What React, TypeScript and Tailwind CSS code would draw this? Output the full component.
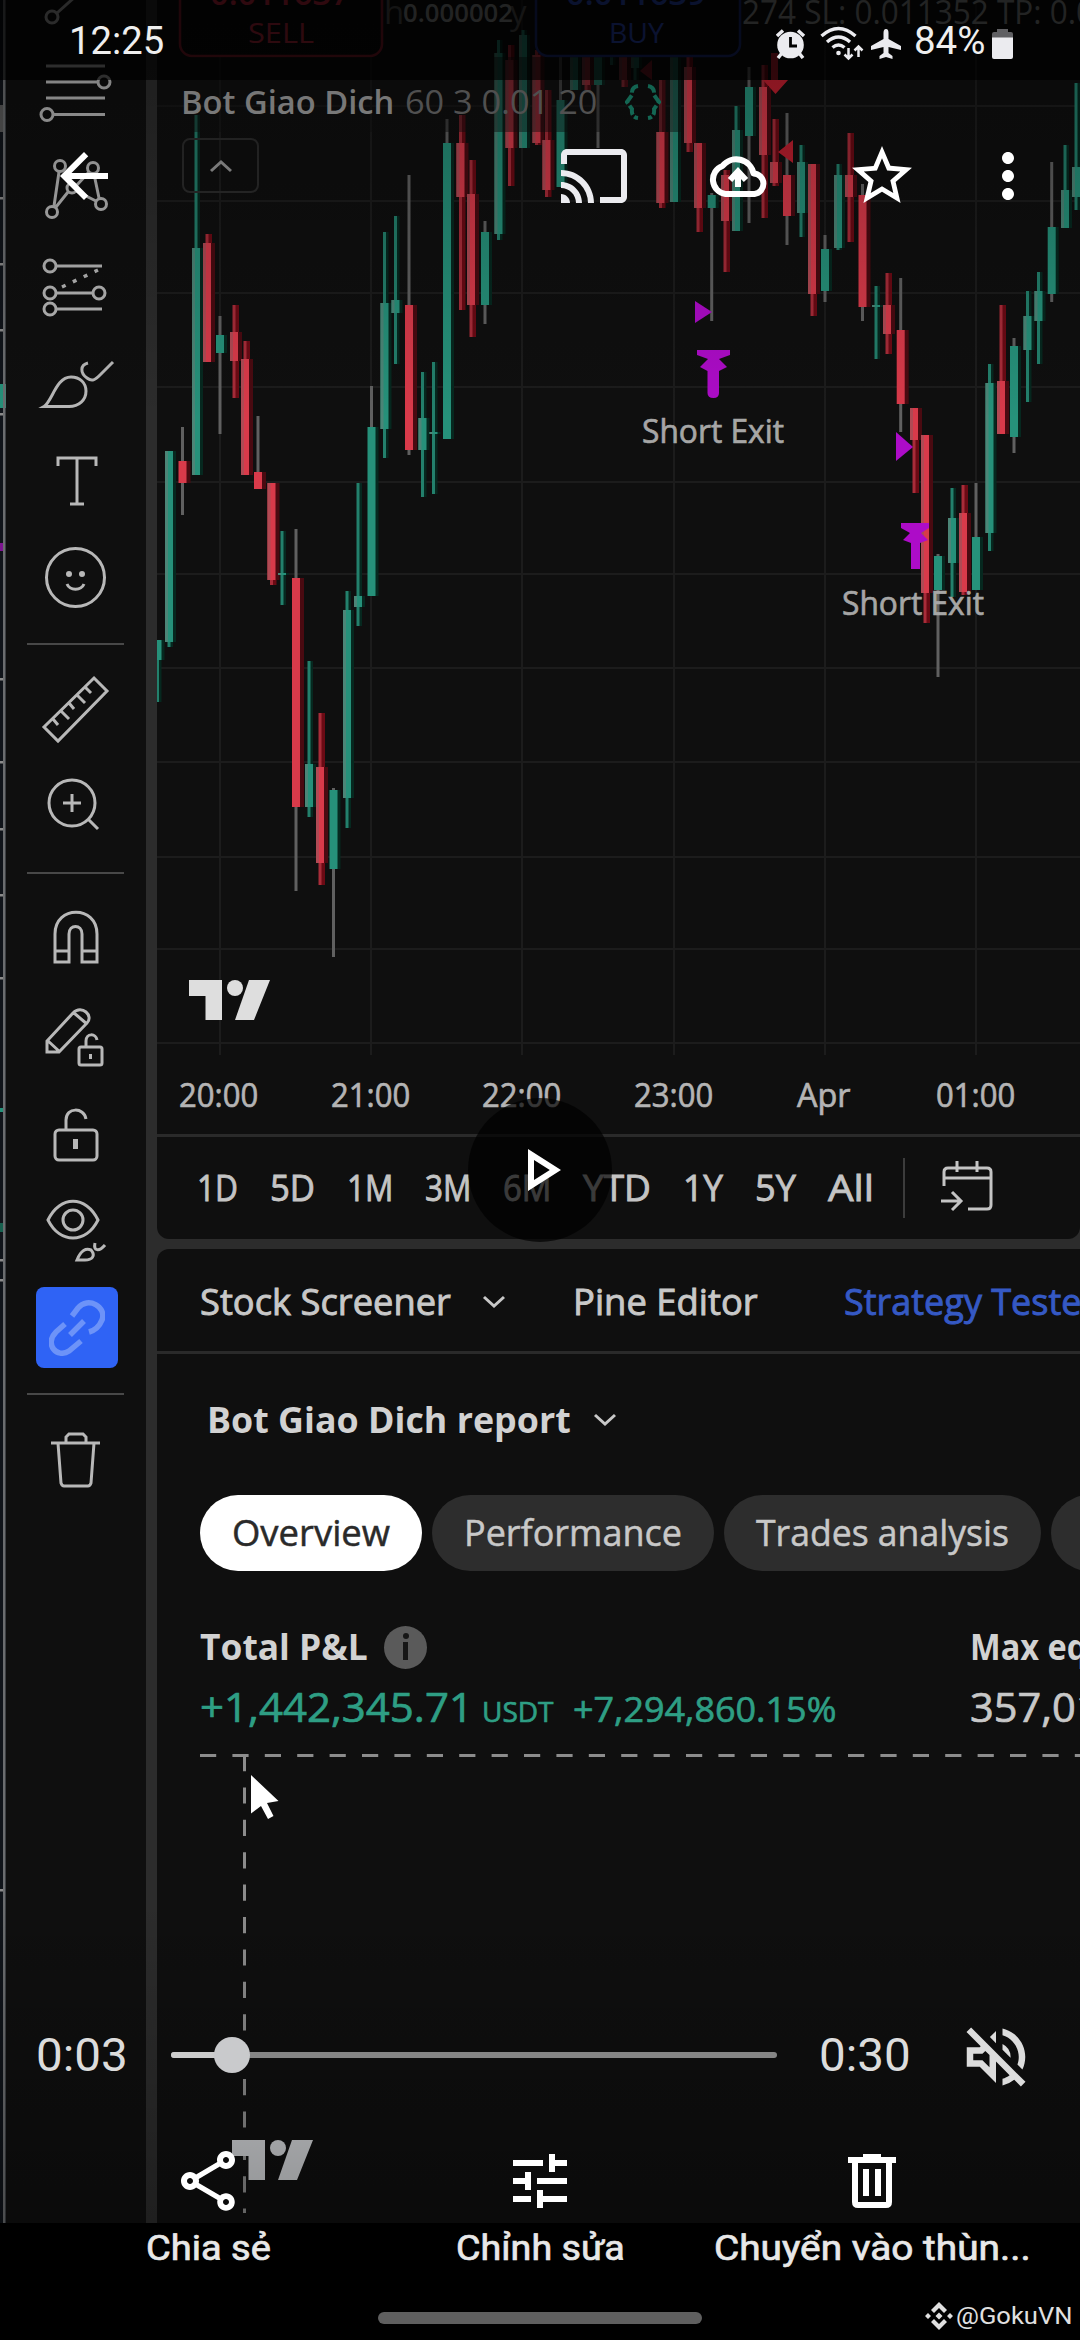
import { ReactNode, useLayoutEffect, useRef, useState } from "react";
import {
    MdArrowBack,
    MdCast,
    MdMoreVert,
    MdOutlinePlayArrow,
    MdOutlineShare,
    MdOutlineVolumeOff,
    MdStarOutline,
    MdTune
} from "react-icons/md";

const GREEN = '#26917a'
const RED = '#d93a4a'
const GRAY = '#606060'
const PURPLE = '#ad0cc8'

// x, wick top, body top, body bottom, wick bottom, color, gray wick
type Candle = [number, number, number, number, number, 'g' | 'r', boolean?]

const candles: Candle[] = [
    [157.5, 640, 640, 660, 702, 'g'],
    [169, 451, 451, 642, 647, 'g'],
    [182.5, 427, 461, 483, 515, 'r', true],
    [196, 115, 248, 475, 475, 'g'],
    [207, 234, 243, 362, 362, 'r'],
    [220, 316, 335, 353, 434, 'g', true],
    [234, 305, 332, 361, 398, 'r'],
    [245, 341, 359, 475, 475, 'r'],
    [258, 416, 472, 489, 489, 'r', true],
    [271.5, 483, 483, 580, 585, 'r'],
    [282, 531, 573, 575, 605, 'g'],
    [296, 529, 578, 807, 891, 'r', true],
    [309, 661, 764, 807, 817, 'g'],
    [320, 713, 767, 863, 885, 'r'],
    [333.5, 788, 790, 869, 957, 'g', true],
    [347, 591, 610, 798, 828, 'g'],
    [358, 483, 596, 607, 626, 'g'],
    [371.5, 386, 427, 596, 596, 'g', true],
    [384.5, 232, 303, 429, 458, 'g'],
    [395.5, 216, 300, 313, 364, 'g'],
    [409, 175, 305, 450, 455, 'r', true],
    [422.5, 372, 418, 450, 497, 'g'],
    [433.5, 362, 432, 434, 494, 'g'],
    [447, 119, 143, 439, 439, 'g', true],
    [460.5, 115, 143, 197, 310, 'r'],
    [471, 160, 194, 305, 337, 'r'],
    [485, 221, 232, 305, 324, 'g', true],
    [498.5, 40, 53, 234, 240, 'g'],
    [509.5, 45, 60, 148, 186, 'r'],
    [523, 30, 35, 148, 148, 'g'],
    [536.5, 50, 55, 143, 145, 'r'],
    [546.5, 90, 140, 190, 197, 'r'],
    [560.5, 56, 100, 187, 187, 'g', true],
    [574, 50, 55, 90, 90, 'g'],
    [586, 50, 55, 85, 90, 'r'],
    [598, 50, 57, 85, 148, 'g', true],
    [611.5, 50, 55, 57, 65, 'g'],
    [623, 50, 57, 80, 87, 'r'],
    [635, 50, 57, 68, 80, 'g'],
    [660.5, 80, 132, 203, 208, 'r'],
    [674, 50, 57, 202, 202, 'g'],
    [688, 57, 67, 143, 152, 'r'],
    [698, 143, 143, 208, 232, 'r'],
    [711.7, 193, 195, 208, 321, 'g', true],
    [725, 170, 175, 221, 272, 'r'],
    [736, 106, 130, 231, 231, 'g'],
    [749, 67, 87, 136, 223, 'g', true],
    [763, 65, 87, 155, 218, 'r'],
    [774, 119, 162, 183, 186, 'r'],
    [787, 113, 175, 216, 245, 'r', true],
    [801, 145, 162, 213, 237, 'g'],
    [812, 164, 164, 294, 316, 'r'],
    [825, 235, 249, 291, 302, 'g', true],
    [838, 164, 175, 248, 250, 'g'],
    [849, 133, 175, 197, 242, 'r'],
    [862.5, 184, 195, 307, 321, 'r', true],
    [876, 286, 305, 307, 359, 'g'],
    [887, 273, 305, 334, 354, 'r'],
    [900.7, 278, 330, 404, 432, 'r', true],
    [914, 408, 408, 440, 493, 'r'],
    [925, 435, 435, 593, 623, 'r'],
    [938, 554, 556, 590, 677, 'g', true],
    [952, 488, 518, 563, 597, 'g'],
    [963, 485, 513, 592, 595, 'r'],
    [976, 483, 537, 590, 590, 'g', true],
    [989.5, 364, 383, 533, 551, 'g'],
    [1001, 305, 381, 434, 434, 'r'],
    [1014, 338, 346, 437, 453, 'g', true],
    [1027.5, 291, 316, 350, 402, 'g'],
    [1038.5, 272, 291, 321, 364, 'g'],
    [1051.7, 162, 227, 294, 302, 'g', true],
    [1065, 145, 190, 228, 228, 'g'],
    [1076, 83, 167, 197, 210, 'g'],
]

const gridX = [220, 371, 522, 674, 825, 976]
const gridY = [106, 201, 293, 387, 482, 574, 668, 762, 857, 949, 1043]

const ranges: [string, number][] = [
    ['1D', 41], ['5D', 45], ['1M', 46], ['3M', 46], ['6M', 48], ['YTD', 68], ['1Y', 40], ['5Y', 41], ['All', 46],
]

// One line of text squeezed or stretched to the given width
const Fit = ({ w, className = '', children }: { w: number, className?: string, children: ReactNode }) => {
    const ref = useRef<HTMLSpanElement>(null)
    const [scale, setScale] = useState(1)

    useLayoutEffect(() => {
        if (ref.current) {
            setScale(w / ref.current.offsetWidth)
        }
    }, [w])

    return (
        <span className={`block shrink-0 ${className}`} style={{ width: w }}>
            <span ref={ref} className="inline-block origin-left whitespace-nowrap" style={{ transform: `scaleX(${scale})` }}>
                {children}
            </span>
        </span>
    )
}

const TvLogo = ({ className }: { className: string }) => (
    <svg viewBox="0 0 81 40" width="81" height="40" className={className} fill="currentColor">
        <path d="M0 0H33V40H16.500V16H0z" />
        <circle cx="46" cy="8" r="8" />
        <path d="M60 0H81L65 40H46z" />
    </svg>
)

const Chevron = ({ className }: { className: string }) => (
    <svg viewBox="0 0 24 14" width="24" height="14" className={`shrink-0 ${className}`} fill="none" stroke="currentColor" strokeWidth="3">
        <path d="M2 2L12 11L22 2" />
    </svg>
)

// Slot of the drawing toolbar, from y to y + h of the frame
const Tool = ({ y, h, children }: { y: number, h: number, children: ReactNode }) => (
    <svg viewBox={`6 ${y} 140 ${h}`} width="140" height={h} className="block shrink-0 text-[#b8b8b8]" fill="none" stroke="currentColor" strokeWidth="3">
        {children}
    </svg>
)

const Toolbar = () => (
    <div className="flex flex-col w-[140px] shrink-0">
        <Tool y={0} h={50}>
            <circle cx="52" cy="17" r="6" />
            <path d="M57 13L76 -4" />
        </Tool>
        <Tool y={50} h={85}>
            <path d="M46 66H105M46 82H98M46 98H105M53 114.500H105" />
            <circle cx="104" cy="82" r="6" />
            <circle cx="47" cy="114.500" r="6" />
        </Tool>
        <Tool y={135} h={95}>
            <path d="M59 172L54 206M56 207L68 192M76 186L89 172M94 174L99 198M76 191L96 201" />
            <circle cx="60" cy="166" r="5.500" />
            <circle cx="93" cy="168" r="5.500" />
            <circle cx="101" cy="204" r="5.500" />
            <circle cx="52" cy="212" r="5.500" />
            <circle cx="72" cy="188" r="5" />
        </Tool>
        <Tool y={230} h={100}>
            <path d="M56 266H102M56 293H92M56 309H102" />
            <path d="M62 287L98 270" strokeWidth="3.500" strokeDasharray="4 8" />
            <circle cx="50" cy="266" r="6" />
            <circle cx="50" cy="293" r="6" />
            <circle cx="99" cy="293" r="6" />
            <circle cx="50" cy="309" r="6" />
        </Tool>
        <Tool y={330} h={100}>
            <path d="M44 406.500C52 402 56 377 71 377C80 377 86 383 86 391C86 400 79 406.500 69 406.500z" />
            <path d="M88 363C80 365 80 373 87 378C92 382 95 380 100 375L113 362" />
        </Tool>
        <Tool y={430} h={100}>
            <path d="M58 466V458H96V466M77 458V504M70 504H84" />
        </Tool>
        <Tool y={530} h={113}>
            <circle cx="75.500" cy="577.500" r="29" />
            <circle cx="69" cy="574" r="3" fill="currentColor" stroke="none" />
            <circle cx="82" cy="574" r="3" fill="currentColor" stroke="none" />
            <path d="M67 584C70 591 81 591 84 584" />
        </Tool>
        <div className="h-[2px] w-[97px] ml-[21px] bg-[#484848] shrink-0" />
        <Tool y={645} h={110}>
            <path d="M94 678L107 691L58 741L44 727zM53 719L58 725M61 711L69 719M69 703L74 709M77 695L85 703M85 687L91 693" />
        </Tool>
        <Tool y={755} h={117}>
            <circle cx="72" cy="803" r="23" />
            <path d="M63 803H81M72 794V812M88 819L98 829" />
        </Tool>
        <div className="h-[2px] w-[97px] ml-[21px] bg-[#484848] shrink-0" />
        <Tool y={874} h={115}>
            <path d="M55 962V934C55 905 97 905 97 934V962H82V934C82 924 69 924 69 934V962zM55 951H69M82 951H97" />
        </Tool>
        <Tool y={989} h={95}>
            <path d="M47 1052V1041L73 1013C82 1004 94 1016 87 1023L59 1052zM47 1040L60 1052M74 1013L87 1024" />
            <rect x="79" y="1047" width="23" height="18" rx="2" />
            <path d="M86 1047V1041C86 1033 96 1033 97 1040M90.500 1054V1059" />
        </Tool>
        <Tool y={1084} h={96}>
            <rect x="55" y="1130" width="42" height="30" rx="4" />
            <path d="M66 1130V1120C66 1107 84 1107 86 1119" />
            <rect x="73" y="1139" width="5" height="10" fill="currentColor" stroke="none" />
        </Tool>
        <Tool y={1180} h={107}>
            <path d="M48 1220C60 1195 86 1195 98 1220C86 1244 60 1244 48 1220z" />
            <circle cx="73" cy="1220" r="10" />
            <path d="M77 1260C81 1250 86 1248 91 1250C96 1256 92 1260 85 1260zM95 1243C93 1251 99 1252 105 1245" />
        </Tool>
        <div className="w-[82px] h-[81px] ml-[30px] rounded-lg bg-[#2f63f5] flex items-center justify-center shrink-0">
            <svg viewBox="48 1300 56 56" width="56" height="56" fill="none" stroke="#6d93f8" strokeWidth="5.500">
                <path d="M71 1316L77 1308C87 1296 106 1307 101 1320C99 1325 95 1330 88 1332M64 1324L55 1332C43 1344 56 1359 68 1351L80 1341M69 1335L83 1321" />
            </svg>
        </div>
        <Tool y={1368} h={25}>{null}</Tool>
        <div className="h-[2px] w-[97px] ml-[21px] bg-[#484848] shrink-0" />
        <Tool y={1395} h={110}>
            <path d="M51 1443H100M66 1442V1437L69 1434H83L86 1437V1442M58 1443L61 1483Q62 1486 64 1486H88Q90 1486 91 1483L94 1443" />
        </Tool>
    </div>
)

// Right edge of the price scale that shows left of the toolbar
const EdgeStrip = () => (
    <svg viewBox="0 0 6 2223" width="6" height="2223" className="block shrink-0 bg-[#10141a]">
        {[198, 264, 330, 414, 679, 762, 829, 895, 978, 1260, 1280, 1890].map(y => (
            <rect key={y} x="0" y={y - 1} width="4" height="2.500" fill="#8a8a8a" />
        ))}
        <rect x="0" y="105" width="4" height="27" fill="#5a5a5a" />
        <rect x="0" y="384" width="6" height="24" fill={GREEN} />
        <rect x="0" y="543" width="4" height="8" fill="#7d1590" />
        <rect x="0" y="1108" width="4" height="4" fill={GREEN} />
        <rect x="0" y="1223" width="4" height="9" fill="#17604f" />
        <rect x="3" y="0" width="2.500" height="2223" fill="#6b6d6f" />
    </svg>
)

const Chart = () => (
    <svg viewBox="157 0 923 1057" width="923" height="1057" className="block" fontFamily="'Open Sans', sans-serif">
        {gridX.map(x => <rect key={x} x={x - 1} y="0" width="2" height="1055" fill="#1c1c1c" />)}
        {gridY.map(y => <rect key={y} x="157" y={y - 1} width="923" height="2" fill="#1c1c1c" />)}

        {candles.map(([x, wt, bt, bb, wb, c, gray]) => (
            <g key={x}>
                {!gray && <rect x={x} y={wt} width={c === 'g' ? 4 : 5} height={wb - wt} fill={c === 'g' ? '#06281f' : '#6b0a14'} />}
                <rect x={x - 1} y={bt} width={c === 'g' ? 8 : 9} height={bb - bt} fill={c === 'g' ? '#06281f' : '#4a0a11'} />
                <rect x={x - 1.5} y={wt} width="3" height={wb - wt} fill={gray ? GRAY : c === 'g' ? '#23806c' : '#a82c39'} />
                <rect x={x - 4} y={bt} width="8" height={bb - bt} fill={c === 'g' ? GREEN : RED} />
                {!gray && <rect x={x - 4} y={bt} width="3" height={bb - bt} fill={c === 'g' ? '#4c8577' : '#b04a54'} />}
            </g>
        ))}

        {/* entries */}
        <path d="M771 53H778V80H788L775.500 94L763 80H771zM793 140V163L778 152zM652 60V80L640 71z" fill="#c01f2f" />

        {/* exits */}
        <g fill={PURPLE}>
            <path d="M695 301L712 312L695 323z" />
            <path d="M697 350H730V355L719 359L727 367L719 371V393Q719 398 713.500 398Q707.500 398 707.500 393V371L700 367L708 359L697 355z" />
            <path d="M896 432L913 447L896 461z" />
            <path d="M901 523H929V528L921 533L928 540L920 543V569H911V543L903 540L910 533L901 528z" />
        </g>
        <g fill="#a6a6a6" stroke="#a6a6a6" strokeWidth="0.700" fontSize="33">
            <text x="642" y="442.500" textLength="142" lengthAdjust="spacingAndGlyphs">Short Exit</text>
            <text x="842" y="615" textLength="142" lengthAdjust="spacingAndGlyphs">Short Exit</text>
        </g>

        {/* order labels and trade buttons */}
        <g fill="#969a9a" fontSize="33">
            <text x="742" y="24" textLength="352" lengthAdjust="spacingAndGlyphs">274 SL: 0.011352 TP: 0.0</text>
            <text x="384" y="24" fill="#5a5a5a">h</text>
            <text x="510" y="24" fill="#5a5a5a">y</text>
            <text x="403" y="22" fontSize="26" fontWeight="600" textLength="110" lengthAdjust="spacingAndGlyphs">0.000002</text>
        </g>
        <rect x="180" y="-20" width="202" height="76" rx="12" fill="#0c0c0c" stroke="#8a1c2c" strokeWidth="2.500" />
        <rect x="536" y="-20" width="204" height="76" rx="12" fill="#0a0a0c" stroke="#1c2f80" strokeWidth="2.500" />
        <g fontSize="28">
            <text x="210" y="5" fill="#d02a42" textLength="140" lengthAdjust="spacingAndGlyphs" fontWeight="600" fontSize="32">0.011637</text>
            <text x="248" y="43" fill="#c02a40" textLength="66" lengthAdjust="spacingAndGlyphs">SELL</text>
            <text x="566" y="5" fill="#2f50cc" textLength="140" lengthAdjust="spacingAndGlyphs" fontWeight="600" fontSize="32">0.011639</text>
            <text x="609" y="43" fill="#2f50cc" textLength="55" lengthAdjust="spacingAndGlyphs">BUY</text>
        </g>
    </svg>
)

const Legend = () => (
    <div className="absolute left-0 top-[57px] w-[524px] h-[75px] bg-[#0f0f0f]/45">
        <div className="flex items-center h-[90px] pl-6 text-[33px] leading-[90px]">
            <Fit w={213} className="text-[#a2a2a2] font-semibold">Bot Giao Dich</Fit>
            <Fit w={192} className="ml-[11px] text-[#6c6c6c]">60 3 0.01 20</Fit>
            <svg viewBox="0 0 36 36" width="36" height="36" className="ml-[28px] shrink-0" fill="none" stroke="#1a8a70" strokeWidth="4" strokeDasharray="10 2.500">
                <path d="M13 2Q6 3 7 11L2 18L7 25Q6 33 13 34M23 2Q30 3 29 11L34 18L29 25Q30 33 23 34" />
            </svg>
        </div>
    </div>
)

const ChartPanel = () => (
    <div className="bg-[#0f0f0f] rounded-b-xl overflow-hidden h-[1239px] flex flex-col">
        <div className="relative h-[1057px]">
            <Chart />
            <Legend />
            <div className="absolute left-[25px] top-[138px] w-[77px] h-[55px] rounded-lg border-2 border-[#2c2c2c] flex items-center justify-center text-[#9a9a9a]">
                <Chevron className="rotate-180" />
            </div>
            <TvLogo className="absolute left-[32px] top-[980px] text-[#dedede]" />
        </div>
        <div className="h-[77px] flex pl-[22px] gap-[72.5px] text-[33px] leading-[76px] text-[#b4b4b4] [-webkit-text-stroke:0.7px]">
            <Fit w={79}>20:00</Fit>
            <Fit w={79}>21:00</Fit>
            <Fit w={79}>22:00</Fit>
            <Fit w={79}>23:00</Fit>
            <Fit w={54} className="ml-3">Apr</Fit>
            <Fit w={79} className="ml-3">01:00</Fit>
        </div>
        <div className="flex-1 border-t-3 border-[#2a2a2a] flex items-center pl-10 text-[37px] leading-[96px] text-[#c4c4c4]">
            <div className="flex gap-8 -mt-[2px] [-webkit-text-stroke:0.9px]">
                {ranges.map(([label, w]) => <Fit key={label} w={w}>{label}</Fit>)}
            </div>
            <div className="w-[2px] h-[60px] bg-[#3c3c3c] ml-[29px]" />
            <svg viewBox="0 0 54 52" width="54" height="52" className="ml-[35px] -mt-1" fill="none" stroke="currentColor" strokeWidth="3">
                <path d="M4 26V12Q4 8 8 8H47Q51 8 51 12V45Q51 49 47 49H28M4 18H51M17 1V12M37 1V12M1 41H20M12 32L21 41L12 50" />
            </svg>
        </div>
    </div>
)

const Pill = ({ w, text, active }: { w: number, text: string, active?: boolean }) => (
    <div className={`h-[76px] leading-[76px] rounded-full px-8 shrink-0 [-webkit-text-stroke:0.5px] ${active ? 'bg-white text-[#2a2a2a]' : 'bg-[#2d2d2d] text-[#c8c8c8]'}`}>
        <Fit w={w}>{text}</Fit>
    </div>
)

const TesterPanel = () => (
    <div className="relative bg-[#0f0f0f] rounded-tl-xl overflow-hidden h-[974px] mt-[10px] text-[36px] text-[#c8c8c8]">
        <div className="h-[105px] border-b-3 border-[#2a2a2a] flex items-center pl-[43px] leading-[102px] pt-[3px] [-webkit-text-stroke:0.9px]">
            <Fit w={251}>Stock Screener</Fit>
            <Chevron className="ml-[31px]" />
            <Fit w={185} className="ml-[67px]">Pine Editor</Fit>
            <Fit w={252} className="ml-[86px] text-[#3559c4]">Strategy Tester</Fit>
        </div>
        <div className="h-[132px] flex items-center pl-[50px] leading-[132px] font-bold">
            <Fit w={364} className="text-[#d2d2d2]">Bot Giao Dich report</Fit>
            <Chevron className="ml-[22px]" />
        </div>
        <div className="flex gap-[10px] pl-[43px] mt-[9px]">
            <Pill w={158} text="Overview" active />
            <Pill w={218} text="Performance" />
            <Pill w={253} text="Trades analysis" />
            <Pill w={240} text="List of trades" />
        </div>
        <div className="flex mt-[46px] pl-[43px]">
            <div className="w-[770px] shrink-0">
                <div className="flex items-center leading-[60px] h-[60px] font-bold text-[#d2d2d2]">
                    <Fit w={168}>Total P&L</Fit>
                    <div className="w-[43px] h-[43px] ml-[16px] rounded-full bg-[#5a5a5a] flex flex-col items-center pt-[7px] gap-[3px]">
                        <div className="w-[6px] h-[6px] bg-[#161616] rounded-full" />
                        <div className="w-[5px] h-[18px] bg-[#161616]" />
                    </div>
                </div>
                <div className="flex items-baseline leading-[60px] text-[#2e9e84] [-webkit-text-stroke:0.7px]">
                    <Fit w={273} className="text-[40px]">+1,442,345.71</Fit>
                    <Fit w={72} className="text-[28px] ml-[9px]">USDT</Fit>
                    <Fit w={263} className="text-[35px] ml-[19px]">+7,294,860.15%</Fit>
                </div>
            </div>
            <div>
                <Fit w={362} className="font-bold text-[#d2d2d2] leading-[60px]">Max equity drawdown</Fit>
                <Fit w={212} className="text-[40px] leading-[60px] [-webkit-text-stroke:0.7px]">357,017.33</Fit>
            </div>
        </div>
        {/* crosshair and pointer on the equity plot */}
        <svg viewBox="157 1249 923 974" width="923" height="974" className="absolute left-0 top-0" fill="none">
            <path d="M200 1755.500H1080M244.500 1755V2213" stroke="#8c8c8c" strokeWidth="3" strokeDasharray="16.200 16.200" />
            <path d="M251 1775L278.500 1801L267 1803L273.500 1816L268 1819L261 1806L251 1813.500z" fill="#ffffff" />
        </svg>
        <TvLogo className="absolute left-[75px] top-[891px] text-[#cfd1d4]" />
    </div>
)

const StatusBar = () => (
    <div className="absolute inset-x-0 top-0 h-[80px] bg-black/65 flex items-center pl-[69px] pr-[67px] text-[39px] leading-[86px] text-[#efefef]">
        <Fit w={95} className="mt-[2px]">12:25</Fit>
        <svg viewBox="776 29 30 31" width="30" height="31" className="ml-auto mt-[7px]" fill="#ebebef">
            <circle cx="790.500" cy="46" r="13.300" />
            <path d="M777 37L783 31.500M804 37L798 31.500M782 54L778 59M799 54L803 59" stroke="#ebebef" strokeWidth="3.500" />
            <path d="M790.500 38V47H797" stroke="#000" strokeWidth="2.800" fill="none" />
        </svg>
        <svg viewBox="820 26 44 35" width="44" height="35" className="ml-[14px] mt-[7px]" fill="none" stroke="#ebebef" strokeWidth="3.400">
            <path d="M821.500 36Q838.500 21 855.500 36M827 42Q838.500 32 850 42M832.500 47.500Q838.500 42.500 844.500 47.500" />
            <circle cx="838.500" cy="53" r="2.300" fill="#ebebef" stroke="none" />
            <path d="M848.500 48V58M844.500 54.500L848.500 58.500L852.500 54.500M858.500 57V47M854.500 50.500L858.500 46.500L862.500 50.500" strokeWidth="2.500" />
        </svg>
        <svg viewBox="870 29 32 31" width="32" height="31" className="ml-[6px] mt-[7px]" fill="#ebebef">
            <path d="M886 30C888 30 888.500 32 888.500 34V40L901 47V51L888.500 48V54L892.500 57V60L886 58L879.500 60V57L883.500 54V48L871 51V47L883.500 40V34C883.500 32 884 30 886 30z" />
        </svg>
        <Fit w={71} className="ml-[12px] mt-[2px]">84%</Fit>
        <svg viewBox="992 28 21 31" width="21" height="31" className="ml-[7px] mt-[7px]">
            <path d="M992 38V34Q992 32 994 32H997V29H1008V32H1011Q1013 32 1013 34V38z" fill="#606063" />
            <path d="M992 37.500H1013V57Q1013 59 1011 59H994Q992 59 992 57z" fill="#ebebef" />
        </svg>
    </div>
)

const PlayerHeader = () => (
    <div className="absolute inset-x-0 top-[140px] h-[72px] flex pl-12 text-[72px] text-white">
        <MdArrowBack />
        <MdCast className="ml-[438px] text-[#ebebef]" />
        <svg viewBox="702 140 72 72" width="72" height="72" className="ml-[72px]" fill="none" stroke="currentColor" strokeWidth="6">
            <path d="M725.500 194A14.500 14.500 0 0 1 722.500 166A17.500 17.500 0 0 1 753.500 173.500A10.300 10.300 0 0 1 754.500 194z" strokeLinejoin="round" />
            <path d="M738 187V173M730 180L738 171.500L746 180" />
        </svg>
        <MdStarOutline className="ml-[72px]" />
        <MdMoreVert className="ml-[54px]" />
    </div>
)

const Timeline = () => (
    <div className="absolute inset-x-0 top-[2019px] h-[72px] flex items-center pl-[36px] text-[46px] leading-[74px] text-[#dcdcdc]">
        <Fit w={92}>0:03</Fit>
        <div className="ml-[43px] w-[606px] h-[6px] rounded-full bg-[#858585] flex items-center">
            <div className="w-[61px] h-[6px] rounded-full bg-[#cccccc]" />
            <div className="w-9 h-9 -ml-[18px] rounded-full bg-[#c9cacc] shrink-0" />
        </div>
        <Fit w={92} className="ml-[42px]">0:30</Fit>
        <MdOutlineVolumeOff className="ml-[46px] mt-[4px] text-[78px]" />
    </div>
)

const Action = ({ w, label, children }: { w: number, label: string, children: ReactNode }) => (
    <div className="flex flex-col items-center w-[332px] text-[72px] text-white">
        {children}
        <Fit w={w} className="text-[35px] leading-[62px] pt-px text-[#e8e8e8] [-webkit-text-stroke:0.7px]">{label}</Fit>
    </div>
)

const Actions = () => (
    <div className="absolute inset-x-0 top-[2145px] flex pl-[42px]">
        <Action w={125} label="Chia sẻ"><MdOutlineShare /></Action>
        <Action w={169} label="Chỉnh sửa"><MdTune /></Action>
        <Action w={317} label="Chuyển vào thùn...">
            <svg viewBox="836 2145 72 72" width="72" height="72" fill="none" stroke="currentColor" strokeWidth="6">
                <path d="M848 2160H896M863 2157H881M855 2160V2202Q855 2205 858 2205H886Q889 2205 889 2202V2160M866 2169V2196M878 2169V2196" />
            </svg>
        </Action>
    </div>
)

const App = () => {
    return (
        <div className="relative w-[1080px] h-[2340px] bg-black overflow-hidden font-['Open_Sans',sans-serif]">
            <div className="flex h-[2223px] bg-[#0f0f0f] overflow-hidden">
                <EdgeStrip />
                <Toolbar />
                <div className="flex-1 min-w-0 bg-[#2c2c2c] pl-[11px]">
                    <ChartPanel />
                    <TesterPanel />
                </div>
            </div>

            <div className="absolute inset-x-0 top-0 h-[420px] bg-linear-to-b from-black/35 to-transparent" />
            <div className="absolute inset-x-0 top-[1900px] h-[323px] bg-linear-to-b from-transparent to-black/30" />

            <div className="font-[Roboto,sans-serif]">
                <StatusBar />
                <PlayerHeader />
                <div className="absolute left-[468px] top-[1098px] w-36 h-36 rounded-full bg-black/70 flex items-center justify-center text-[72px] text-white">
                    <MdOutlinePlayArrow />
                </div>
                <Timeline />
                <Actions />
                <div className="absolute left-[378px] top-[2312px] w-[324px] h-3 rounded-full bg-[#5f5f5f]" />
                <div className="absolute right-2 top-[2300px] flex items-center text-[24px] leading-8 text-[#e0e0e0]">
                    <svg viewBox="0 0 28 28" width="28" height="28" fill="currentColor" className="mr-[3px]">
                        <path d="M14 0L22 8L19 11L14 6L9 11L6 8zM14 28L22 20L19 17L14 22L9 17L6 20zM3 11L6 14L3 17L0 14zM25 11L28 14L25 17L22 14zM14 10.500L17.500 14L14 17.500L10.500 14z" />
                    </svg>
                    <Fit w={116}>@GokuVN</Fit>
                </div>
            </div>
        </div>
    )
}

export default App;
